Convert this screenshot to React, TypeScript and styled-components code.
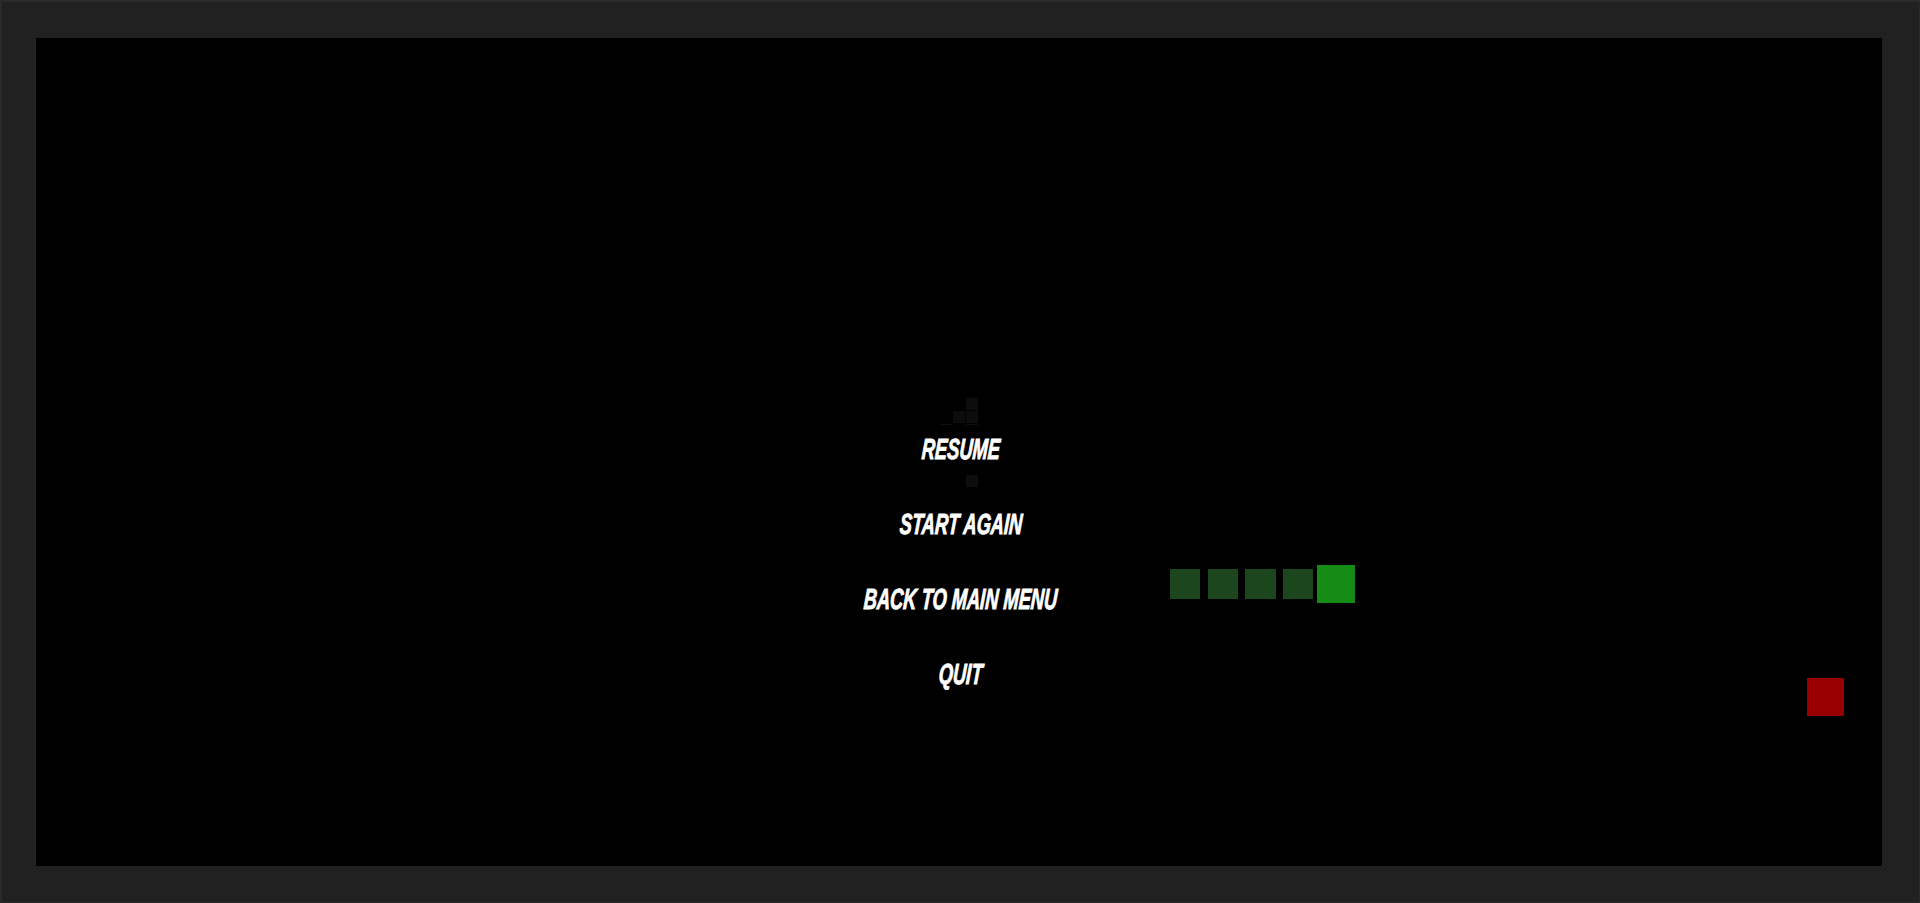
import React from "react";
import styled, { createGlobalStyle } from "styled-components";

const Global = createGlobalStyle`
  html, body { margin: 0; padding: 0; height: 100%; background: #222; overflow: hidden; }
  #root { height: 100%; }
`;

const Frame = styled.div`
  box-sizing: border-box;
  width: 1920px;
  height: 903px;
  padding: 38px 38px 37px 36px;
  background-color: #222;
  background-image: repeating-conic-gradient(#232323 0% 25%, #1f1f1f 0% 50%);
  background-size: 4px 4px;
  box-shadow: inset 1px 1px 0 1px #2a2a2a, inset -1px -1px 0 0 #2a2a2a;
`;

const Stage = styled.main`
  position: relative;
  box-sizing: border-box;
  width: 100%;
  height: 100%;
  padding: 394px 0 0 4px;
  display: flex;
  justify-content: center;
  align-items: flex-start;
  background: #000;
`;

const Menu = styled.nav`
  position: relative;
  display: flex;
  flex-direction: column;
  align-items: center;
  gap: 40px;
`;

const Item = styled.div`
  height: 35px;
  line-height: 35px;
  color: #fff;
  font-family: "Liberation Sans", sans-serif;
  font-size: 29px;
  font-weight: 700;
  font-style: italic;
  white-space: nowrap;
  -webkit-text-stroke: 0.9px #fff;
  transform: scaleX(0.63) skewX(-6deg);
`;

const Square = styled.div<{ $x: number; $y: number; $w: number; $h: number; $c: string }>`
  position: absolute;
  left: ${(p) => p.$x - 36}px;
  top: ${(p) => p.$y - 38}px;
  width: ${(p) => p.$w}px;
  height: ${(p) => p.$h}px;
  background: ${(p) => p.$c};
`;

const trail = [
  [1170, 30],
  [1208, 30],
  [1245, 31],
  [1283, 30],
];

const ghosts = [
  [966, 398, 12, 12],
  [953, 411, 12, 12],
  [966, 411, 12, 12],
  [940, 424, 12, 1],
  [966, 424, 12, 1],
  [966, 475, 12, 12],
];

export default function App() {
  return (
    <>
      <Global />
      <Frame>
        <Stage>
          {ghosts.map(([x, y, w, h]) => (
            <Square key={`${x}-${y}`} $x={x} $y={y} $w={w} $h={h} $c="#0d0d0d" />
          ))}
          {trail.map(([x, w]) => (
            <Square key={x} $x={x} $y={569} $w={w} $h={30} $c="#1b461e" />
          ))}
          <Square $x={1317} $y={565} $w={38} $h={38} $c="#158c16" />
          <Square $x={1807} $y={678} $w={37} $h={38} $c="#980000" />
          <Menu>
            <Item>RESUME</Item>
            <Item>START AGAIN</Item>
            <Item>BACK TO MAIN MENU</Item>
            <Item>QUIT</Item>
          </Menu>
        </Stage>
      </Frame>
    </>
  );
}
